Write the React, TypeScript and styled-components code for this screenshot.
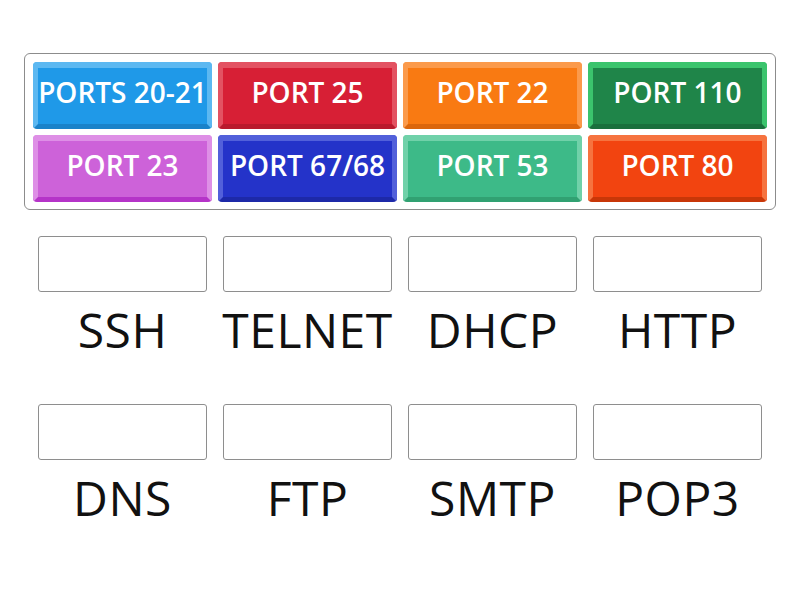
import React from "react";
import styled, { createGlobalStyle } from "styled-components";

const Global = createGlobalStyle`
  html, body { margin: 0; padding: 0; background: #ffffff; }
  body { font-family: "Open Sans", "Liberation Sans", sans-serif; }
`;

const Page = styled.div`
  width: 800px;
  height: 600px;
  padding: 53px 0 0 24px;
  box-sizing: border-box;
`;

const Tray = styled.div`
  width: 752px;
  box-sizing: border-box;
  border: 1px solid #8c8c8c;
  border-radius: 6px;
  padding: 8px 7px 7px 8px;
  display: grid;
  grid-template-columns: repeat(4, 179px);
  grid-auto-rows: 67px;
  gap: 6px;
`;

type TileProps = { $main: string; $light: string; $dark: string };

const Tile = styled.div<TileProps>`
  box-sizing: border-box;
  border-radius: 4px;
  border-style: solid;
  border-width: 6px 5px 5px 5px;
  border-color: ${(p) => p.$light} ${(p) => p.$light} ${(p) => p.$dark} ${(p) => p.$light};
  background: ${(p) => p.$main};
  display: flex;
  align-items: center;
  justify-content: center;
  color: #ffffff;
  font-family: "Open Sans", "Liberation Sans", sans-serif;
  font-weight: 600;
  font-size: 28px;
  white-space: nowrap;
  padding-bottom: 8px;
`;

const Board = styled.div`
  margin-top: 26px;
  margin-left: 9px;
  display: grid;
  grid-template-columns: repeat(4, 179px);
  column-gap: 6px;
  row-gap: 43px;
`;

const Cell = styled.div`
  display: flex;
  flex-direction: column;
  align-items: center;
`;

const Slot = styled.div`
  width: 169px;
  height: 56px;
  box-sizing: border-box;
  border: 1px solid #8e8e8e;
  border-radius: 3px;
  background: #ffffff;
`;

const Label = styled.div`
  margin-top: 7px;
  font-family: "Open Sans", "Liberation Sans", sans-serif;
  font-size: 48px;
  line-height: 62px;
  letter-spacing: 0.5px;
  color: #111111;
  white-space: nowrap;
`;

const tiles = [
  { t: "PORTS 20-21", main: "#1f99e8", light: "#5cb8f1", dark: "#1a82c9" },
  { t: "PORT 25", main: "#d71f35", light: "#e35262", dark: "#b91a2d" },
  { t: "PORT 22", main: "#f97a12", light: "#fb9a4b", dark: "#db660c" },
  { t: "PORT 110", main: "#1f8549", light: "#3bc46d", dark: "#1a6f3d" },
  { t: "PORT 23", main: "#cd62d9", light: "#de8fe6", dark: "#b534c8" },
  { t: "PORT 67/68", main: "#2433c9", light: "#5260da", dark: "#1d29a8" },
  { t: "PORT 53", main: "#3dba88", light: "#70d1a9", dark: "#31a172" },
  { t: "PORT 80", main: "#f24410", light: "#f6733f", dark: "#c83708" },
];

const labels = ["SSH", "TELNET", "DHCP", "HTTP", "DNS", "FTP", "SMTP", "POP3"];

export default function App() {
  return (
    <>
      <Global />
      <Page>
        <Tray>
          {tiles.map((x) => (
            <Tile key={x.t} $main={x.main} $light={x.light} $dark={x.dark}>
              {x.t}
            </Tile>
          ))}
        </Tray>
        <Board>
          {labels.map((l) => (
            <Cell key={l}>
              <Slot />
              <Label>{l}</Label>
            </Cell>
          ))}
        </Board>
      </Page>
    </>
  );
}
